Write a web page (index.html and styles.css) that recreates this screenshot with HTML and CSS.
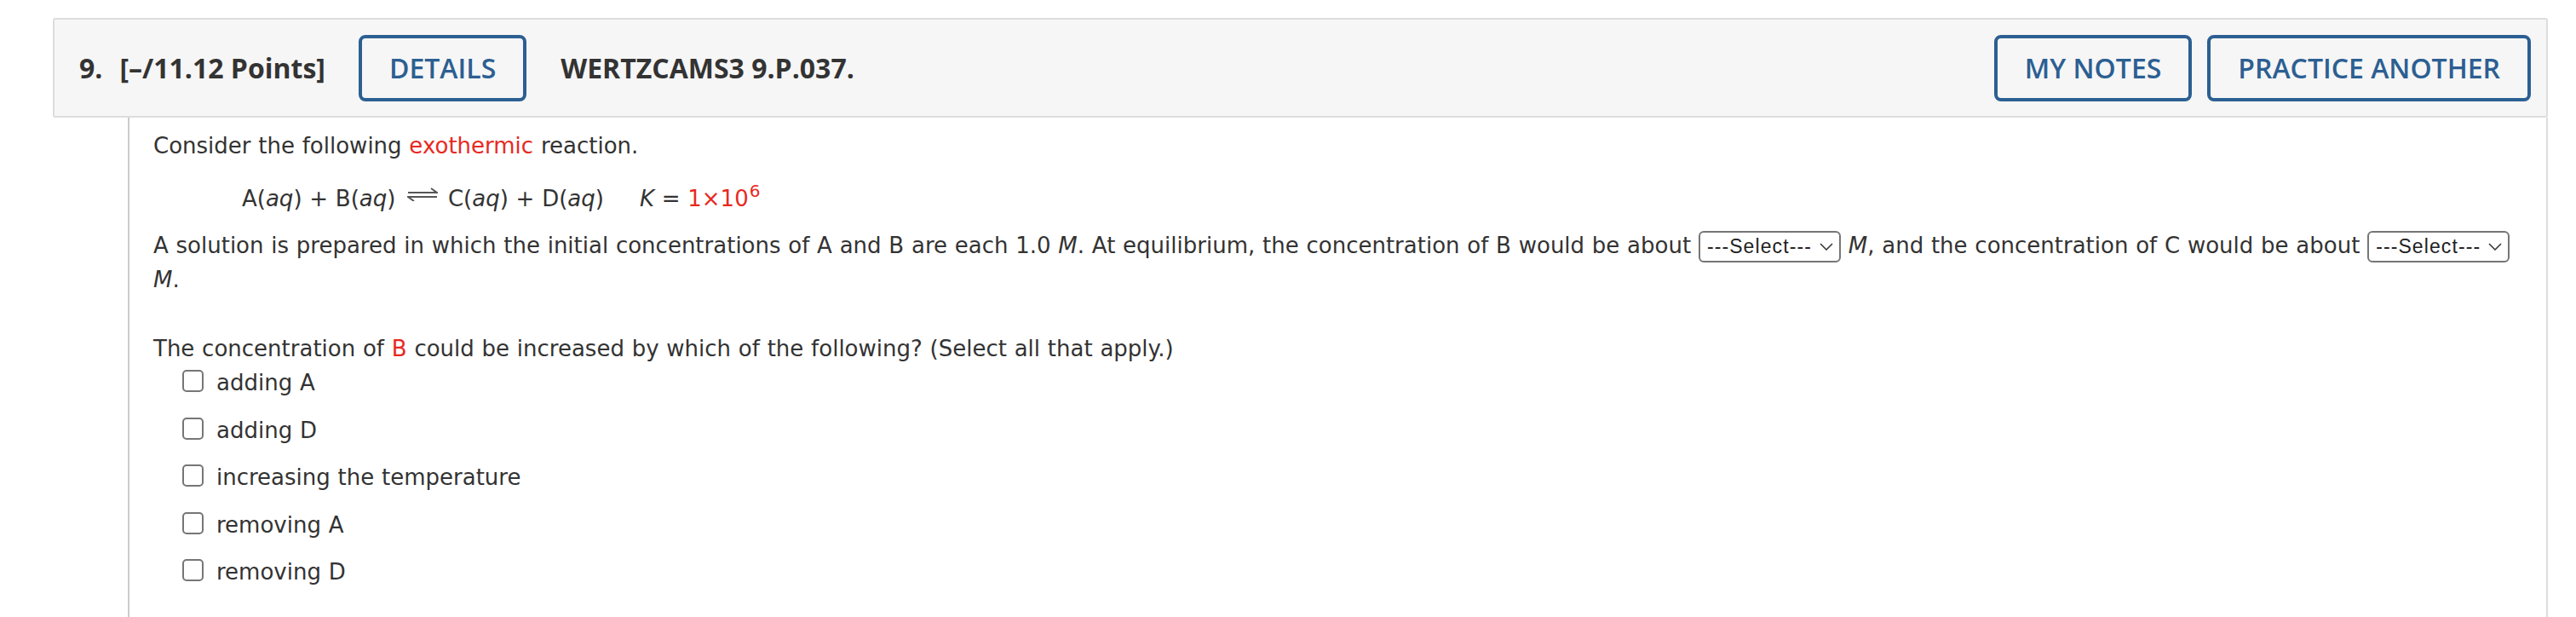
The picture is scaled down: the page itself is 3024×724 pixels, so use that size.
FILE: index.html
```html
<!DOCTYPE html>
<html lang="en">
<head>
<meta charset="utf-8">
<title>Question 9</title>
<link rel="stylesheet" href="styles.css">
</head>
<body>
<div class="question">
  <div class="qhead">
    <span class="qnum">9.</span>
    <span class="pts">[–/11.12 Points]</span>
    <button class="btn details">DETAILS</button>
    <span class="qid">WERTZCAMS3 9.P.037.</span>
    <div class="spacer"></div>
    <div class="actions">
      <button class="btn">MY NOTES</button>
      <button class="btn">PRACTICE ANOTHER</button>
    </div>
  </div>
  <div class="qbody">
    <p class="p1">Consider the following <span class="red">exothermic</span> reaction.</p>
    <p class="eq">A(<i>aq</i>) + B(<i>aq</i>) <svg class="eqarrow" width="36" height="16" viewBox="0 0 36 16"><path d="M1 6 H35 L28 1" /><path d="M35 11 H1 L8 16" /></svg> C(<i>aq</i>) + D(<i>aq</i>)<span class="kexp"><i>K</i> = <span class="red">1×10<sup>6</sup></span></span></p>
    <p class="p3">A solution is prepared in which the initial concentrations of A and B are each 1.0 <i>M</i>. At equilibrium, the concentration of B would be about <span class="sel">---Select---<svg class="chev" width="16" height="9" viewBox="0 0 16 9"><polyline points="1,1 8,8 15,1" /></svg></span> <i>M</i>, and the concentration of C would be about <span class="sel">---Select---<svg class="chev" width="16" height="9" viewBox="0 0 16 9"><polyline points="1,1 8,8 15,1" /></svg></span><br><i>M</i>.</p>
    <p class="p4">The concentration of <span class="red">B</span> could be increased by which of the following? (Select all that apply.)</p>
    <ul class="choices">
      <li class="choice"><span class="box"></span>adding A</li>
      <li class="choice"><span class="box"></span>adding D</li>
      <li class="choice"><span class="box"></span>increasing the temperature</li>
      <li class="choice"><span class="box"></span>removing A</li>
      <li class="choice"><span class="box"></span>removing D</li>
    </ul>
  </div>
</div>
</body>
</html>
```

FILE: styles.css
```css
* { box-sizing: border-box; }

body {
  margin: 0;
  background: #ffffff;
  font-family: "DejaVu Sans", Verdana, sans-serif;
  color: #333333;
}

.question {
  padding: 21px 33px 0 62px;
}

.qhead {
  display: flex;
  align-items: center;
  height: 117px;
  background: #f6f6f6;
  border: 2px solid #dddddd;
  border-radius: 3px;
  padding: 0 18px 0 29px;
  font-family: "Open Sans", sans-serif;
  font-weight: 700;
  font-size: 32px;
  color: #333333;
}

.qnum { margin-right: 20px; }

.btn {
  height: 78px;
  border: 4px solid #2c5f92;
  border-radius: 8px;
  background: transparent;
  color: #2c5f92;
  font-family: "Open Sans", sans-serif;
  font-weight: 600;
  font-size: 32px;
  padding: 0 32px;
}

.details {
  margin-left: 39px;
  margin-right: 40px;
}

.spacer { flex: 1; }

.actions {
  display: flex;
  gap: 18px;
}

.qbody {
  margin-left: 88px;
  border-left: 2px solid #cccccc;
  border-right: 2px solid #dddddd;
  padding: 13px 0 40px 28px;
  font-size: 26px;
  line-height: 40px;
  word-spacing: 0.5px;
}

.qbody p { margin: 0; }

.red { color: #e8291f; }

.eq {
  margin-top: 22px !important;
  padding-left: 104px;
}

.eqarrow {
  vertical-align: 6px;
  margin: 0 3px 0 5px;
  fill: none;
  stroke: #555555;
  stroke-width: 2;
}

.kexp { margin-left: 42px; }

sup {
  font-size: 20px;
  line-height: 0;
  vertical-align: 11px;
  margin-left: 1px;
}

.p3 {
  margin-top: 15px !important;
  white-space: nowrap;
}

.sel {
  display: inline-flex;
  align-items: center;
  height: 37px;
  border: 2px solid #767676;
  border-radius: 6px;
  padding: 0 7px 0 8px;
  font-family: "Liberation Sans", Arial, sans-serif;
  font-size: 23px;
  letter-spacing: 1.1px;
  line-height: 33px;
  word-spacing: 0;
  color: #222222;
}

.chev {
  margin-left: 9px;
  fill: none;
  stroke: #333333;
  stroke-width: 1.5;
}

.p4 { margin-top: 41px !important; }

.choices {
  list-style: none;
  margin: 0;
  padding: 0 0 0 34px;
  display: flex;
  flex-direction: column;
  gap: 15.5px;
}

.choice {
  display: flex;
  align-items: flex-start;
  height: 40px;
}

.box {
  width: 25px;
  height: 26px;
  border: 2px solid #767676;
  border-radius: 5px;
  margin: 5px 15px 0 0;
  background: #ffffff;
}
```
